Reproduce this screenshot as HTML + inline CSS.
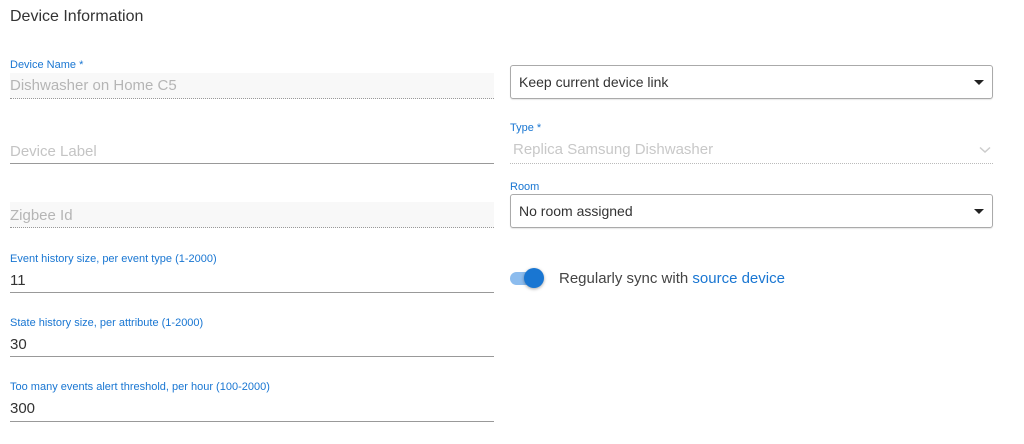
<!DOCTYPE html><html><head><style>
body{margin:0;width:1024px;height:444px;background:#fff;font-family:"Liberation Sans",sans-serif;position:relative;overflow:hidden}
.a{position:absolute;white-space:nowrap}
.lbl{font-size:11px;color:#1976d2}
.v{font-size:15px}
.bg{background:#f8f8f8}
.dot{border-bottom:1px dotted #999}
.sel{position:absolute;left:510px;width:481px;height:32px;border:1px solid #aaa;border-radius:3px;box-shadow:0 1px 1px rgba(0,0,0,.1)}
.sel span{position:absolute;left:8px;top:8px;font-size:14px;color:#333}
.sel i{position:absolute;right:8px;top:14px;width:0;height:0;border-left:5px solid transparent;border-right:5px solid transparent;border-top:5px solid #222}
</style></head><body>
<div class="a" style="left:10px;top:8px;font-size:16px;color:#333">Device Information</div>

<div class="a lbl" style="left:10px;top:59px">Device Name *</div>
<div class="a bg dot" style="left:10px;top:73px;width:484px;height:25px"></div>
<div class="a v" style="left:10px;top:77px;color:#b5b5b5">Dishwasher on Home C5</div>

<div class="a v" style="left:10px;top:143px;color:#c4c4c4">Device Label</div>
<div class="a" style="left:10px;top:163px;width:484px;border-top:1px solid #999"></div>

<div class="a bg dot" style="left:10px;top:202px;width:484px;height:25px"></div>
<div class="a v" style="left:10px;top:207px;color:#b5b5b5">Zigbee Id</div>

<div class="a lbl" style="left:10px;top:253px">Event history size, per event type (1-2000)</div>
<div class="a v" style="left:10px;top:272px;color:#333">11</div>
<div class="a" style="left:10px;top:292px;width:484px;border-top:1px solid #999"></div>

<div class="a lbl" style="left:10px;top:317px">State history size, per attribute (1-2000)</div>
<div class="a v" style="left:10px;top:336px;color:#333">30</div>
<div class="a" style="left:10px;top:356px;width:484px;border-top:1px solid #999"></div>

<div class="a lbl" style="left:10px;top:381px">Too many events alert threshold, per hour (100-2000)</div>
<div class="a v" style="left:10px;top:400px;color:#333">300</div>
<div class="a" style="left:10px;top:421px;width:484px;border-top:1px solid #999"></div>

<div class="sel" style="top:65px"><span>Keep current device link</span><i></i></div>

<div class="a lbl" style="left:510px;top:122px">Type *</div>
<div class="a v" style="left:513px;top:141px;color:#c8c8c8">Replica Samsung Dishwasher</div>
<svg class="a" style="left:979px;top:146px" width="12" height="8"><path d="M1 1.5L6 6L11 1.5" fill="none" stroke="#ccc" stroke-width="1.5"/></svg>
<div class="a dot" style="left:510px;top:163px;width:483px;border-bottom-color:#bbb"></div>

<div class="a lbl" style="left:510px;top:181px">Room</div>
<div class="sel" style="top:194px"><span>No room assigned</span><i></i></div>

<div class="a" style="left:510px;top:272px;width:32px;height:13px;border-radius:7px;background:#8cbcee"></div>
<div class="a" style="left:524px;top:268px;width:20px;height:20px;border-radius:50%;background:#1976d2;box-shadow:0 1px 3px rgba(0,0,0,.35)"></div>
<div class="a" style="left:559px;top:270px;font-size:15px;color:#444">Regularly sync with <span style="color:#1976d2">source device</span></div>
</body></html>
